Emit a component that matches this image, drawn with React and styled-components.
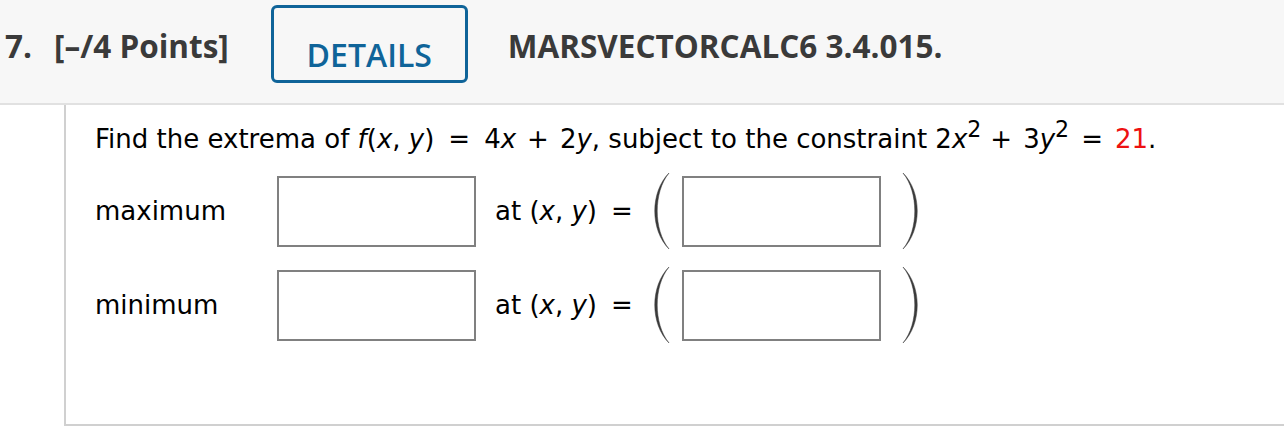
import React from "react";
import styled, { createGlobalStyle } from "styled-components";

const GlobalStyle = createGlobalStyle`
  html, body { margin: 0; padding: 0; background: #ffffff; }
  body { font-family: "DejaVu Sans", Verdana, sans-serif; }
`;

const Page = styled.div`
  width: 1284px;
  height: 448px;
  overflow: hidden;
  background: #ffffff;
`;

const Header = styled.header`
  display: flex;
  align-items: flex-start;
  height: 103px;
  padding-left: 5px;
  background: #f7f7f7;
  border-bottom: 2px solid #e1e1e1;
  font-family: "Open Sans", "Noto Sans", sans-serif;
  color: #3a3a3a;
`;

const HeadText = styled.span`
  margin-top: 26px;
  margin-left: ${(p) => p.$gap || 0}px;
  font-size: 31.5px;
  line-height: 40px;
  font-weight: 700;
  white-space: pre;
`;

const DetailsButton = styled.button`
  box-sizing: border-box;
  display: block;
  margin: 5px 0 0 42px;
  width: 197px;
  height: 78px;
  padding: 31px 0 9px;
  border: 3px solid #0f6499;
  border-radius: 6px;
  background: transparent;
  color: #0f6499;
  font-family: "Open Sans", "Noto Sans", sans-serif;
  font-size: 32px;
  line-height: 32px;
  font-weight: 600;
  text-align: center;
`;

const Panel = styled.section`
  box-sizing: border-box;
  margin-left: 64px;
  height: 321px;
  padding: 16px 0 0 29px;
  border-left: 2px solid #d0d0d0;
  border-bottom: 2px solid #d0d0d0;
  color: #000;
  font-family: "DejaVu Sans", Verdana, sans-serif;
  font-size: 26px;
`;

const Question = styled.p`
  margin: 0;
  line-height: 36px;
  white-space: pre;
`;

const Var = styled.i`
  font-style: italic;
`;

const Op = styled.span`
  margin: 0 ${(p) => p.$r ?? 11}px 0 ${(p) => p.$l ?? 11}px;
`;

const Sup = styled.sup`
  font-size: 0.85em;
  line-height: 0;
  vertical-align: 0.5em;
`;

const Red = styled.span`
  color: #ee1111;
`;

const Row = styled.div`
  display: flex;
  align-items: center;
  height: 78px;
  margin-top: ${(p) => p.$top}px;
  line-height: 36px;
`;

const Label = styled.span`
  width: 182px;
  flex: none;
`;

const AnswerBox = styled.input`
  box-sizing: border-box;
  flex: none;
  width: 199px;
  height: 71px;
  margin: 0 ${(p) => p.$right || 0}px 0 0;
  padding: 0;
  border: 2px solid #808080;
  background: #fff;
  font-size: 20px;
  outline: none;
`;

const AtText = styled.span`
  white-space: pre;
`;

const Equals = styled.span`
  margin-left: 14px;
`;

const ParenSvg = styled.svg`
  flex: none;
  display: block;
  margin: 0 ${(p) => p.$right}px 0 ${(p) => p.$left}px;
`;

function Paren({ close, left, right }) {
  const d = close
    ? "M3 1 C22 20 22 58 3 77 C18.7 58 18.7 20 3 1 Z"
    : "M15 1 C-4 20 -4 58 15 77 C-0.7 58 -0.7 20 15 1 Z";
  return (
    <ParenSvg width="18" height="78" viewBox="0 0 18 78" $left={left} $right={right}>
      <path d={d} fill="#3a3a3a" stroke="#3a3a3a" strokeWidth="0.5" strokeLinejoin="round" />
    </ParenSvg>
  );
}

function AnswerRow({ label, top }) {
  return (
    <Row $top={top}>
      <Label>{label}</Label>
      <AnswerBox type="text" $right={19} aria-label={label} />
      <AtText>
        at (<Var>x</Var>, <Var>y</Var>)
      </AtText>
      <Equals>=</Equals>
      <Paren left={21} right={10} />
      <AnswerBox type="text" aria-label={`${label} point`} />
      <Paren close left={19} right={0} />
    </Row>
  );
}

export default function App() {
  return (
    <Page>
      <GlobalStyle />
      <Header>
        <HeadText>7.</HeadText>
        <HeadText $gap={22}>[–/4 Points]</HeadText>
        <DetailsButton type="button">DETAILS</DetailsButton>
        <HeadText $gap={40}>MARSVECTORCALC6 3.4.015.</HeadText>
      </Header>
      <Panel>
        <Question>
          Find the extrema of <Var>f</Var>(<Var>x</Var>, <Var>y</Var>)<Op $l={14} $r={14}>=</Op>4<Var>x</Var>
          <Op $l={11} $r={11}>+</Op>2<Var>y</Var>, subject to the constraint 2<Var>x</Var>
          <Sup>2</Sup>
          <Op $l={9}>+</Op>3<Var>y</Var>
          <Sup>2</Sup>
          <Op $l={12} $r={12}>=</Op>
          <Red>21</Red>.
        </Question>
        <AnswerRow label="maximum" top={15} />
        <AnswerRow label="minimum" top={16} />
      </Panel>
    </Page>
  );
}
